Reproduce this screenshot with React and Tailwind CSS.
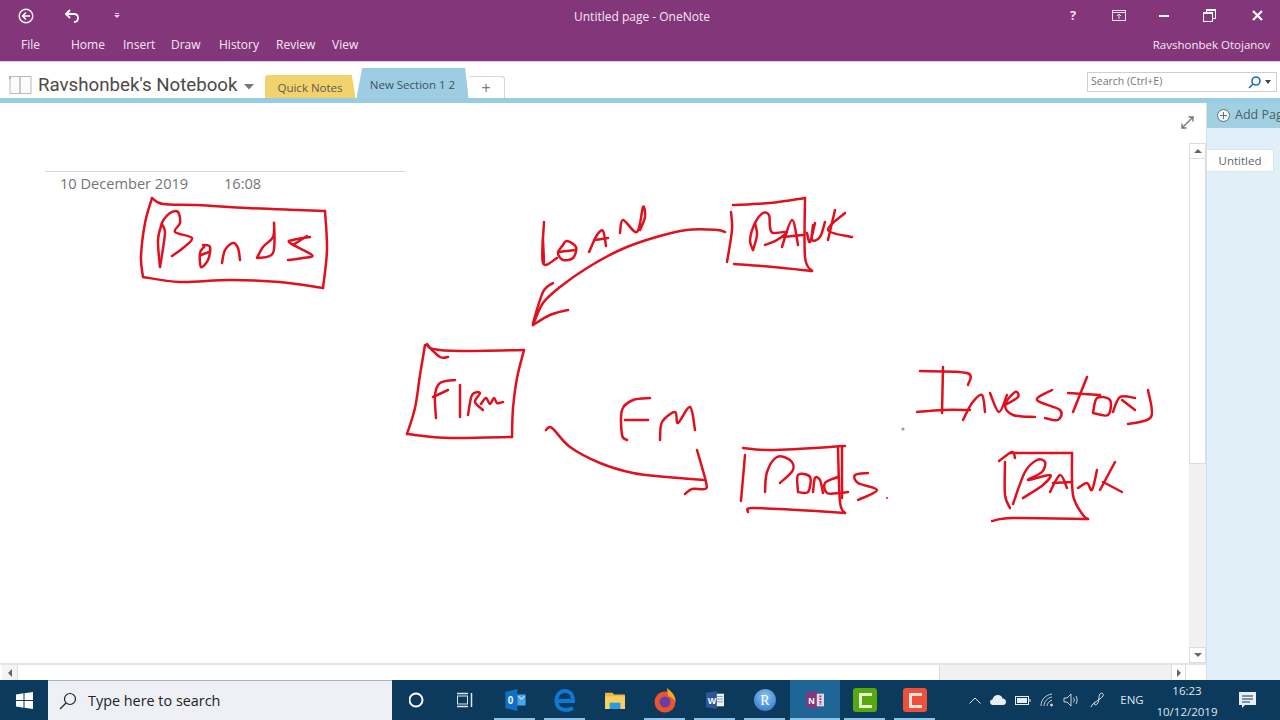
import React from "react";

const INK = [
  // Bonds box
  [[152,198],[163,204],[197,205],[247,208],[297,210],[325,211]],
  [[325,211],[327,250],[323,288]],
  [[323,288],[280,282],[230,280],[180,282],[143,277]],
  [[143,277],[141,257],[145,223],[152,198]],
  [[160,267],[158,240],[162,223]],
  [[160,267],[165,233],[162,223],[170,213],[178,212],[180,223],[175,232],[192,238],[183,248],[172,256]],
  [[203,245],[210,247],[208,260],[201,267],[200,253],[204,247]],
  [[201,255],[209,252]],
  [[222,263],[225,250],[233,243],[238,248],[240,260]],
  [[257,258],[263,247],[273,237],[274,223],[273,253],[257,258]],
  [[310,237],[293,240],[290,243],[312,255],[303,258],[288,260]],
  [[293,245],[307,236]],
  // LOAN
  [[544,222],[543,263],[557,258]],
  [[543,240],[544,262]],
  [[563,245],[558,253],[563,260],[573,258],[576,247],[567,241],[563,245]],
  [[558,252],[576,250]],
  [[589,252],[597,235],[603,231],[606,246]],
  [[595,240],[608,238]],
  [[620,233],[623,220],[637,232],[643,207],[645,217],[640,230]],
  // arrow
  [[725,232],[717,230],[687,230],[653,238],[620,250],[587,268],[560,287],[543,303],[533,325]],
  [[553,283],[543,292],[533,323]],
  [[533,325],[550,315],[568,310]],
  // BANK box top
  [[731,212],[732,230],[727,262]],
  [[733,205],[770,203],[805,198]],
  [[805,198],[805,257],[812,271]],
  [[734,264],[773,267],[812,271]],
  [[753,250],[750,240],[755,223],[763,213],[769,215],[770,227],[773,233],[787,232],[777,240],[765,245]],
  [[753,250],[757,235],[755,223]],
  [[782,247],[792,220],[798,245]],
  [[783,237],[803,235]],
  [[807,233],[810,242],[815,223]],
  [[813,225],[812,240],[820,237],[825,222]],
  [[828,240],[835,210]],
  [[845,213],[828,230],[852,237]],
  // Firm
  [[425,345],[420,375],[415,408],[407,434]],
  [[427,344],[433,349],[460,351],[524,350]],
  [[427,345],[440,357],[448,357]],
  [[524,350],[517,378],[513,408],[512,437]],
  [[407,434],[450,438],[512,437]],
  [[436,418],[435,395],[440,383],[455,380]],
  [[433,397],[448,390]],
  [[460,385],[460,417]],
  [[468,415],[472,395],[480,393],[475,402],[483,410]],
  [[481,404],[486,398],[490,404],[494,398],[497,403],[503,402]],
  // arrow 2
  [[546,430],[552,428],[570,447],[600,463],[633,473],[667,477],[705,480]],
  [[697,450],[706,482],[705,489],[692,489],[685,494]],
  // Fm
  [[627,440],[622,435],[622,410],[633,400],[650,398]],
  [[625,420],[648,420]],
  [[660,440],[662,422],[675,412],[678,423],[690,407],[695,430]],
  // Investors
  [[920,371],[967,373],[968,385]],
  [[943,367],[942,413]],
  [[917,412],[943,410],[970,410]],
  [[963,420],[972,403],[982,395],[985,412]],
  [[990,393],[999,412],[1007,395]],
  [[1005,405],[1018,397],[1015,392],[1005,405],[1013,415],[1035,417]],
  [[1052,390],[1037,400],[1060,410],[1058,420],[1045,418]],
  [[1087,377],[1073,412]],
  [[1068,393],[1100,395]],
  [[1093,413],[1097,398],[1110,400],[1108,415],[1093,413]],
  [[1113,412],[1120,397],[1135,398]],
  [[1122,400],[1135,410]],
  [[1148,390],[1151,417],[1128,424]],
  // Bonds box 2
  [[743,448],[773,450],[845,446]],
  [[745,455],[741,501]],
  [[838,448],[840,502],[845,513]],
  [[842,447],[842,498]],
  [[748,512],[752,508],[797,510],[845,513]],
  [[765,492],[767,472],[777,457],[790,460],[793,470],[780,483]],
  [[798,492],[798,475],[810,477],[808,492],[798,492]],
  [[813,492],[815,478],[820,480],[823,493]],
  [[838,477],[825,483],[827,493],[840,493],[848,492]],
  [[868,473],[855,475],[858,483],[877,490],[858,500]],
  // Bank 2
  [[999,461],[1012,452],[1015,458]],
  [[1010,453],[1072,453]],
  [[1005,462],[1005,495],[1010,508]],
  [[1072,453],[1073,495],[1083,515],[1088,519]],
  [[992,521],[1013,518],[1088,519]],
  [[1013,504],[1025,472],[1037,460],[1045,462],[1042,472],[1028,480],[1050,475],[1043,485],[1023,498]],
  [[1050,492],[1060,475],[1067,488]],
  [[1053,483],[1072,482]],
  [[1078,488],[1087,483],[1092,490],[1097,470]],
  [[1100,490],[1115,462]],
  [[1103,482],[1122,492]],
];

function smooth(p) {
  let d = `M${p[0][0]} ${p[0][1]}`;
  for (let i = 0; i < p.length - 1; i++) {
    const a = p[Math.max(i - 1, 0)], b = p[i], c = p[i + 1], e = p[Math.min(i + 2, p.length - 1)];
    const k = 6;
    d += ` C${b[0] + (c[0] - a[0]) / k} ${b[1] + (c[1] - a[1]) / k} ${c[0] - (e[0] - b[0]) / k} ${c[1] - (e[1] - b[1]) / k} ${c[0]} ${c[1]}`;
  }
  return d;
}

function Ink() {
  return (
    <svg className="absolute inset-0 w-[1206px] h-[560px]" viewBox="0 103 1206 560" fill="none">
      {INK.map((p, i) => (
        <path key={i} d={smooth(p)} stroke="#e0101f" strokeWidth="2.5" strokeLinecap="round" strokeLinejoin="round" />
      ))}
      <circle cx="887" cy="498" r="1" fill="#e0101f" />
      <circle cx="903" cy="429" r="1.6" fill="#9a9a9a" />
    </svg>
  );
}

function TitleBar() {
  return (
    <div className="h-[62px] bg-[#84367a] text-white border-b border-[#e9c9e6] flex flex-col shrink-0">
      <div className="h-[31px] flex items-center relative">
        <div className="w-[52px] flex justify-center">
          <svg width="16" height="16" viewBox="0 0 16 16" fill="none" stroke="white" strokeWidth="1.4"><circle cx="8" cy="8" r="6.8" /><path d="M12 8H4.5M8 4.5L4.5 8L8 11.5" /></svg>
        </div>
        <div className="w-[40px] flex justify-center">
          <svg width="16" height="16" viewBox="0 0 16 16" fill="none" stroke="white" strokeWidth="1.8"><path d="M6 2L2 6L6 10M2 6H10C13 6 14 8 14 10C14 12 13 14 10 14" /></svg>
        </div>
        <div className="w-[50px] flex justify-center">
          <svg width="6" height="6" viewBox="0 0 6 6" fill="#e6cfe3"><path d="M1 0H5V1H1ZM0 2H6L3 5Z" /></svg>
        </div>
        <div className="absolute left-[574px] top-[8px] text-[12px] text-[#f4e9f2]">Untitled page - OneNote</div>
        <div className="ml-auto flex items-center">
          <span className="w-[20px] mr-[29px] text-center text-[13px] font-bold text-[#f0dff0]">?</span>
          <svg className="mr-[33px]" width="14" height="11" viewBox="0 0 14 11" fill="none" stroke="#f0e2ee"><rect x="0.5" y="0.5" width="13" height="10" /><path d="M0 2.5H14M7 9V4M5 6L7 4L9 6" /></svg>
          <span className="w-[10px] h-[2px] bg-white mr-[34px]" />
          <svg className="mr-[36px]" width="13" height="13" viewBox="0 0 13 13" fill="none" stroke="white" strokeWidth="1.1"><rect x="0.5" y="3.5" width="9" height="9" /><path d="M3.5 3V0.5H12.5V9.5H10" /><path d="M0.5 4.5H9.5M3.5 1.5H12.5" /></svg>
          <svg className="mr-[17px]" width="11" height="11" viewBox="0 0 11 11" stroke="white" strokeWidth="2.2"><path d="M1 1L10 10M10 1L1 10" /></svg>
        </div>
      </div>
      <div className="h-[30px] flex items-start text-[12px] text-[#f4e9f2] leading-[27px] relative">
        <span className="ml-[21px] w-[50px]">File</span>
        <span className="w-[52px]">Home</span>
        <span className="w-[48px]">Insert</span>
        <span className="w-[48px]">Draw</span>
        <span className="w-[57px]">History</span>
        <span className="w-[56px]">Review</span>
        <span>View</span>
        <span className="ml-auto mr-[10px] text-[11.5px]">Ravshonbek Otojanov</span>
      </div>
    </div>
  );
}

function NotebookBar() {
  return (
    <div className="h-[36px] bg-white flex items-end shrink-0 relative">
      <div className="flex items-center self-stretch pl-[9px] pt-[10px]">
        <svg width="24" height="20" viewBox="0 0 24 20" fill="none" stroke="#b9b9b9"><path d="M1 1.5H11V18.5H1ZM11 1.5H22V18.5H11Z" fill="#fbfbfb" /><path d="M1 1V4" stroke="#d96a6a" /></svg>
        <span className="ml-[5px] text-[18.7px] text-[#4a4a4a] font-['Roboto',sans-serif]">Ravshonbek's Notebook</span>
        <svg className="ml-[6px] mt-[3px]" width="10" height="6" viewBox="0 0 10 6" fill="#777"><path d="M0 0H10L5 5.5Z" /></svg>
      </div>
      <div className="ml-[11px] w-[91px] h-[23px] bg-[#f2d26c] rounded-t-[3px] flex items-center justify-center pt-[2px] text-[11.5px] text-[#5b5b5b] [clip-path:polygon(0_0,96%_0,100%_100%,0_100%)]">Quick Notes</div>
      <div className="ml-[1px] w-[112px] h-[30px] bg-[#9ccde2] flex items-start pt-[8px] justify-center text-[11.5px] text-[#41525c] [clip-path:polygon(5%_0,97%_0,100%_100%,0_100%)]">New Section 1 2</div>
      <div className="w-[36px] h-[22px] border-t border-r border-[#d8d8d8] rounded-tr-[3px] flex items-center justify-center text-[#777] text-[16px]">+</div>
      <div className="absolute right-[3px] top-[10px] w-[190px] h-[20px] border border-[#cfcfcf] flex items-center pl-[3px] pr-[5px] text-[10.5px] text-[#767676]">
        <span>Search (Ctrl+E)</span>
        <svg className="ml-auto" width="13" height="13" viewBox="0 0 13 13" fill="none" stroke="#1f6fb0" strokeWidth="1.6"><circle cx="8" cy="5" r="4" /><path d="M5 8L1 12" /></svg>
        <svg className="ml-[4px]" width="6" height="4" viewBox="0 0 6 4" fill="#444"><path d="M0 0H6L3 4Z" /></svg>
      </div>
    </div>
  );
}

function Canvas() {
  return (
    <div className="flex-1 bg-white flex flex-col min-w-0">
      <div className="flex-1 relative flex min-h-0">
        <div className="flex-1 relative">
          <div className="absolute left-[45px] top-[68px] w-[360px] border-t border-[#d6d6d6] pt-[1px] pl-[15px] text-[14.6px] text-[#757575] flex">
            <span className="w-[164px]">10 December 2019</span><span>16:08</span>
          </div>
          <svg className="absolute left-[1181px] top-[13px]" width="13" height="13" viewBox="0 0 13 13" fill="none" stroke="#777" strokeWidth="1.4"><path d="M1 12L12 1M7.5 1H12V5.5M1 7.5V12H5.5" /></svg>
          <Ink />
        </div>
        <div className="w-[17px] shrink-0 mt-[40px] flex flex-col z-10">
          <div className="h-[16px] bg-white border border-[#dcdcdc] flex items-center justify-center"><svg width="8" height="4" viewBox="0 0 8 4" fill="#666"><path d="M0 4H8L4 0Z" /></svg></div>
          <div className="h-[305px] bg-white border-x border-b border-[#dcdcdc]" />
          <div className="flex-1 bg-[#f1f1f1]" />
          <div className="h-[16px] bg-white border border-[#dcdcdc] flex items-center justify-center"><svg width="8" height="4" viewBox="0 0 8 4" fill="#666"><path d="M0 0H8L4 4Z" /></svg></div>
        </div>
      </div>
      <div className="h-[17px] shrink-0 flex border-t-2 border-[#e4e4e4] pl-[2px] pr-[20px]">
        <div className="w-[15px] bg-[#f4f4f4] flex items-center justify-center"><svg width="4" height="8" viewBox="0 0 4 8" fill="#666"><path d="M4 0V8L0 4Z" /></svg></div>
        <div className="w-[923px] bg-white border-x border-[#dcdcdc]" />
        <div className="flex-1 bg-[#f1f1f1]" />
        <div className="w-[15px] bg-white border-x border-[#dcdcdc] flex items-center justify-center"><svg width="4" height="8" viewBox="0 0 4 8" fill="#666"><path d="M0 0V8L4 4Z" /></svg></div>
      </div>
    </div>
  );
}

function PagePane() {
  return (
    <div className="w-[74px] bg-[#e1eff8] shrink-0 overflow-hidden border-l border-[#d5e2ec]">
      <div className="h-[25px] bg-[#a2d0e3] flex items-center pl-[10px] whitespace-nowrap text-[12.5px] text-[#4e5c63]">
        <svg className="shrink-0" width="13" height="13" viewBox="0 0 13 13" fill="none" stroke="#5f6f76"><circle cx="6.5" cy="6.5" r="6" fill="#f2f8fb" /><path d="M6.5 3V10M3 6.5H10" /></svg>
        <span className="ml-[5px]">Add Page</span>
      </div>
      <div className="mt-[21px] w-[67px] h-[23px] bg-white border-y border-r border-[#dbe5ea] flex items-center justify-center text-[11.5px] text-[#666]">Untitled</div>
    </div>
  );
}

function TaskIcon({ children, on, active }) {
  return (
    <div className={`relative w-[50px] h-full flex items-center justify-center ${active ? "bg-[#1f6596]" : ""}`}>
      {children}
      {on && <div className={`absolute bottom-0 h-[2px] bg-[#8fc3e6] ${active ? "left-0 right-0" : "left-[4px] right-[5px]"}`} />}
    </div>
  );
}

function Taskbar() {
  return (
    <div className="h-[40px] bg-[#0b3a5c] flex items-center shrink-0 text-white">
      <div className="w-[48px] flex justify-center">
        <svg width="17" height="17" viewBox="0 0 17 17" fill="white"><path d="M0 2.5L7.5 1.3V8H0ZM8.5 1.2L17 0V8H8.5ZM0 9H7.5V15.7L0 14.5ZM8.5 9H17V17L8.5 15.8Z" /></svg>
      </div>
      <div className="w-[344px] h-full bg-[#eff0f5] border-t border-[#a9b4bd] flex items-center pl-[11px] text-[#222]">
        <svg width="18" height="18" viewBox="0 0 18 18" fill="none" stroke="#222" strokeWidth="1.2"><circle cx="11" cy="7" r="5.5" /><path d="M7 11L1 17" /></svg>
        <span className="ml-[11px] text-[14.4px]">Type here to search</span>
      </div>
      <div className="flex h-full">
        <TaskIcon><svg width="16" height="16" viewBox="0 0 16 16" fill="none" stroke="white" strokeWidth="2"><circle cx="7" cy="8" r="6.5" /></svg></TaskIcon>
        <div className="w-[48px] h-full flex items-center justify-center">
          <svg className="mr-[3px]" width="17" height="16" viewBox="0 0 17 16" fill="none" stroke="#dfe6ea"><rect x="1.5" y="4" width="10" height="8" /><path d="M1 1.5H12M1 14.5H12M15.5 1V15" strokeWidth="1.5" /></svg>
        </div>
        <TaskIcon on>
          <svg width="21" height="22" viewBox="0 0 22 24"><path d="M0 3L13 0V24L0 21Z" fill="#0f6fc4" /><rect x="13" y="6" width="9" height="12" fill="#4aa6e6" /><path d="M14 8L17.5 11L21 8" stroke="white" fill="none" /><text x="2.5" y="16" fontSize="11" fontWeight="700" fill="white" fontFamily="Liberation Sans, sans-serif">0</text></svg>
        </TaskIcon>
        <TaskIcon on>
          <svg width="22" height="24" viewBox="0 0 22 24" fill="none" stroke="#0f78d4" strokeWidth="4"><path d="M3 13H19C19 7 16 3 11 3C6 3 2.500 7 2.500 13C2.500 19 7 22 12 22C15 22 17 21 19 20" /></svg>
        </TaskIcon>
        <TaskIcon>
          <svg width="22" height="18" viewBox="0 0 22 20"><path d="M0 2H8L10 4H22V20H0Z" fill="#f0b93a" /><rect x="0" y="6" width="22" height="14" fill="#f7d065" /><rect x="5" y="13" width="12" height="7" fill="#2d9be0" /></svg>
        </TaskIcon>
        <TaskIcon on>
          <svg width="24" height="26" viewBox="0 0 24 26"><circle cx="12" cy="15" r="10.500" fill="#e8552f" /><path d="M14 1C19 5 23 9 22.500 15C21 12 19 10 15 9Z" fill="#f9a825" /><circle cx="12" cy="15" r="5.500" fill="#6a3ca8" /></svg>
        </TaskIcon>
        <TaskIcon on>
          <svg width="20" height="18" viewBox="0 0 20 20"><rect x="9" y="3" width="11" height="14" fill="#f0f3f6" /><path d="M11 6H19M11 9H19M11 12H19" stroke="#7a8fa8" /><path d="M0 2L12 0V20L0 18Z" fill="#2b5797" /><text x="2" y="14" fontSize="10" fontWeight="700" fill="white" fontFamily="Liberation Sans, sans-serif">W</text></svg>
        </TaskIcon>
        <TaskIcon on>
          <div className="w-[22px] h-[22px] rounded-full bg-[radial-gradient(circle_at_50%_35%,#8fc4f0,#1f6fc4)] flex items-center justify-center text-[14px] text-white font-['Liberation_Serif',serif]">R</div>
        </TaskIcon>
        <TaskIcon on active>
          <svg width="20" height="18" viewBox="0 0 20 20"><rect x="9" y="3" width="11" height="14" fill="#e5d5e6" /><path d="M16 5V15" stroke="#80397b" strokeWidth="2" strokeDasharray="2 1" /><path d="M0 2L12 0V20L0 18Z" fill="#80397b" /><text x="2.500" y="14" fontSize="10" fontWeight="700" fill="white" fontFamily="Liberation Sans, sans-serif">N</text></svg>
        </TaskIcon>
        <TaskIcon on>
          <div className="w-[24px] h-[24px] rounded-[3px] bg-[#57a80f] flex items-center justify-center"><div className="w-[13px] h-[15px] border-[3px] border-r-0 border-[#e6f4cf]" /></div>
        </TaskIcon>
        <TaskIcon on>
          <div className="w-[24px] h-[24px] rounded-[3px] bg-[#f0503a] flex items-center justify-center"><div className="w-[13px] h-[15px] border-[3px] border-r-0 border-[#fde3de]" /></div>
        </TaskIcon>
      </div>
      <div className="ml-auto flex items-center h-full text-[#dfe8ee]">
        <svg className="mr-[9px]" width="12" height="7" viewBox="0 0 12 7" fill="none" stroke="#dfe8ee"><path d="M0.500 6.500L6 1L11.500 6.500" /></svg>
        <svg className="mr-[9px]" width="16" height="10" viewBox="0 0 16 10" fill="#e8eef2"><path d="M3 10C1 10 0 8.500 0 7C0 5.500 1.200 4.500 2.500 4.500C3 2 5 0 8 0C10.500 0 12 1.500 12.500 3.500C14.500 3.500 16 5 16 7C16 8.500 15 10 13 10Z" /></svg>
        <svg className="mr-[9px]" width="16" height="9" viewBox="0 0 16 9" fill="none" stroke="#e8eef2"><rect x="0.500" y="0.500" width="13" height="8" /><rect x="2" y="2" width="10" height="5" fill="#e8eef2" stroke="none" /><path d="M15 3V6" /></svg>
        <svg className="mr-[9px]" width="14" height="14" viewBox="0 0 14 14" fill="none" stroke="#c9d4da"><path d="M1 13C1 7 5 2 12 1M4 13C4 9 7 5 12 4M7 13C7 11 9 8 12 7" /><circle cx="11.500" cy="12" r="1" fill="#e8eef2" /></svg>
        <svg className="mr-[11px]" width="16" height="14" viewBox="0 0 16 14" fill="none" stroke="#c9d4da"><path d="M1 5H4L8 1V13L4 9H1Z" /><path d="M10.500 4.500C11.500 6 11.500 8 10.500 9.500M13 3C14.500 5.500 14.500 8.500 13 11" /></svg>
        <svg className="mr-[12px]" width="15" height="16" viewBox="0 0 15 16" fill="none" stroke="#e0e8ec"><path d="M1 15C3 10 9 9 13 4C14 2 12 0 10 2C8 5 10 9 7 12C5 14 3 12 5 10" /></svg>
        <span className="text-[11.500px] w-[30px] text-center mr-[7px]">ENG</span>
        <div className="w-[66px] flex flex-col items-center text-[11.5px] leading-[21px] mr-[19px] pt-[1px]"><span>16:23</span><span>10/12/2019</span></div>
        <svg className="mr-[24px]" width="17" height="17" viewBox="0 0 17 17" fill="#e8eef2"><path d="M0 0H17V13H6L3 16V13H0Z" /><path d="M3 4H14M3 7H14M3 10H11" stroke="#0b3a5c" /></svg>
      </div>
    </div>
  );
}

export default function App() {
  return (
    <div className="w-[1280px] h-[720px] overflow-hidden flex flex-col bg-white font-['Open_Sans',sans-serif]">
      <TitleBar />
      <NotebookBar />
      <div className="h-[5px] bg-[#98cce2] shrink-0" />
      <div className="flex-1 flex min-h-0">
        <Canvas />
        <PagePane />
      </div>
      <Taskbar />
    </div>
  );
}
